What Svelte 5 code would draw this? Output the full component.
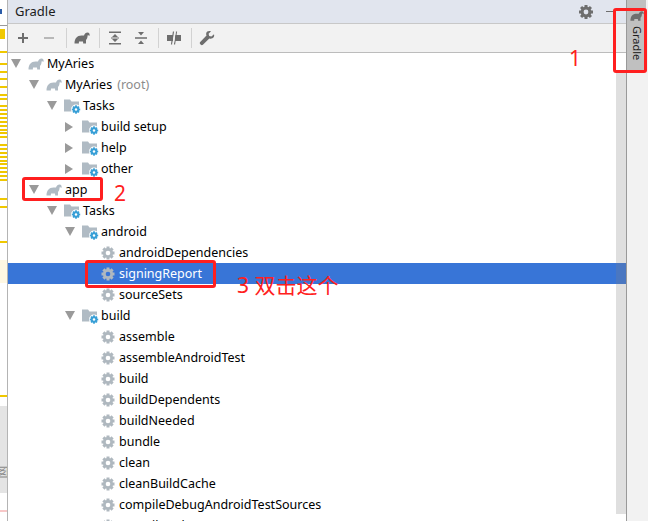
<script>
  const marks = [51, 63, 71, 78, 86, 94, 98, 105, 109, 113, 117, 121, 125, 129, 132, 136, 144, 148, 152, 156, 160, 163, 167, 171, 175, 179, 198, 206, 241, 395];

  const rows = [
    { label: 'MyAries', level: 0, arrow: 'open', icon: 'elephant' },
    { label: 'MyAries', note: '(root)', level: 1, arrow: 'open', icon: 'elephant' },
    { label: 'Tasks', level: 2, arrow: 'open', icon: 'folder' },
    { label: 'build setup', level: 3, arrow: 'closed', icon: 'folder' },
    { label: 'help', level: 3, arrow: 'closed', icon: 'folder' },
    { label: 'other', level: 3, arrow: 'closed', icon: 'folder' },
    { label: 'app', level: 1, arrow: 'open', icon: 'elephant' },
    { label: 'Tasks', level: 2, arrow: 'open', icon: 'folder' },
    { label: 'android', level: 3, arrow: 'open', icon: 'folder' },
    { label: 'androidDependencies', level: 4, icon: 'gear' },
    { label: 'signingReport', level: 4, icon: 'gear', selected: true },
    { label: 'sourceSets', level: 4, icon: 'gear' },
    { label: 'build', level: 3, arrow: 'open', icon: 'folder' },
    { label: 'assemble', level: 4, icon: 'gear' },
    { label: 'assembleAndroidTest', level: 4, icon: 'gear' },
    { label: 'build', level: 4, icon: 'gear' },
    { label: 'buildDependents', level: 4, icon: 'gear' },
    { label: 'buildNeeded', level: 4, icon: 'gear' },
    { label: 'bundle', level: 4, icon: 'gear' },
    { label: 'clean', level: 4, icon: 'gear' },
    { label: 'cleanBuildCache', level: 4, icon: 'gear' },
    { label: 'compileDebugAndroidTestSources', level: 4, icon: 'gear' },
    { label: 'compileDebugSources', level: 4, icon: 'gear' }
  ];

  const teeth = [0, 45, 90, 135];
  const elephantPath = 'M.5 13.500C.5 8.500 3 5.500 7.500 5.500H10C10.500 3.500 12 2.500 13.500 2.500 15.200 2.500 16 4 15.500 6 14.800 5.300 14 5 13.600 5.600 13.500 7.500 13.200 9 12 10V13.500H9.200L9 11.500H5L4.800 13.500z';
</script>

{#snippet elephant(cls)}
  <svg class={cls} width="16" height="16" viewBox="0 0 16 16"><path d={elephantPath} /></svg>
{/snippet}

{#snippet gearShape(cx, cy, r, w)}
  <g transform="translate({cx} {cy})">
    {#each teeth as a}
      <rect x={-w / 2} y={-r} width={w} height={r * 2} transform="rotate({a})" />
    {/each}
    <circle r={r * 0.78} />
  </g>
{/snippet}

<div class="window">
  <aside class="gutter">
    <span class="gutter-blue"></span>
    <span class="gutter-rule"></span>
    <span class="gutter-block"></span>
    {#each marks as y}
      <span class="mark" style="top: {y}px"></span>
    {/each}
    <span class="gutter-cream"></span>
    <span class="gutter-gray"><span class="gutter-glyph">网</span></span>
    <span class="gutter-pink"></span>
  </aside>

  <main class="panel">
    <header class="title-bar">
      <span class="title">Gradle</span>
      <svg class="title-gear" width="16" height="16" viewBox="0 0 16 16">
        <g fill="#6e6e6e">{@render gearShape(8, 8, 7, 3)}</g>
        <circle cx="8" cy="8" r="2.400" fill="#e1e5ee" />
      </svg>
      <span class="minimize"></span>
    </header>

    <div class="toolbar">
      <svg class="tool" viewBox="0 0 16 16"><path d="M7 3h2v4h4v2H9v4H7V9H3V7h4z" fill="#6e6e6e" /></svg>
      <svg class="tool" viewBox="0 0 16 16"><path d="M3 7h10v2H3z" fill="#b8b8b8" /></svg>
      <span class="sep"></span>
      {@render elephant('tool dark')}
      <span class="sep"></span>
      <svg class="tool" viewBox="0 0 16 16" fill="#6e6e6e">
        <path d="M2 1.500h12v1.500H2zM2 13h12v1.500H2zM5 7l3-3 3 3zM5 9l3 3 3-3zM4 7.500h8v1H4z" />
      </svg>
      <svg class="tool" viewBox="0 0 16 16" fill="#6e6e6e">
        <path d="M2 7.300h12v1.400H2zM5 2l3 3.500L11 2zM5 14l3-3.500 3 3.500z" />
      </svg>
      <span class="sep"></span>
      <svg class="tool" viewBox="0 0 16 16">
        <path d="M1 5h6v6H1zM9 5h6v6H9z" fill="#6e6e6e" />
        <path d="M5.500 14.500 7.500 1.500M8.500 14.500l2-13" stroke="#6e6e6e" stroke-width="1.200" fill="none" />
        <path d="M7.200 14.500 9.200 1.500" stroke="#f2f2f2" stroke-width="1.200" fill="none" />
      </svg>
      <span class="sep"></span>
      <svg class="tool" viewBox="0 0 16 16" fill="#6e6e6e">
        <path d="M15 4.200 12.400 6.600 10.200 6l-.6-2.200L12 1.200C9.800.4 7.600 1.200 7.200 3.200c-.2 1 0 1.800.3 2.400L1.200 12c-.6.600-.6 1.500 0 2.100l.6.600c.6.600 1.500.6 2.100 0L10.300 8.400c.7.300 1.500.4 2.400.2 2-.5 3-2.400 2.300-4.400z" />
      </svg>
    </div>

    <div class="tree">
      {#each rows as row}
        <div class="row" class:selected={row.selected} style="padding-left: {row.level * 18 + 3}px">
          <span class="arrow">
            {#if row.arrow === 'open'}
              <svg width="10" height="9" viewBox="0 0 10 9"><path d="M0 0h10L5 9z" /></svg>
            {:else if row.arrow === 'closed'}
              <svg width="8" height="10" viewBox="0 0 8 10"><path d="M0 0l8 5-8 5z" /></svg>
            {/if}
          </span>
          <span class="icon">
            {#if row.icon === 'elephant'}
              {@render elephant('tree-elephant')}
            {:else if row.icon === 'folder'}
              <svg width="17" height="16" viewBox="0 0 17 16">
                <path d="M0 1.500h6l1.500 2H15v10H0z" fill="#b0bbc4" />
                <circle cx="12" cy="11.500" r="5" fill="#fff" />
                <g fill="#389fd6">{@render gearShape(12, 11.500, 4.200, 1.800)}</g>
                <circle cx="12" cy="11.500" r="1.200" fill="#fff" />
              </svg>
            {:else}
              <svg width="16" height="16" viewBox="0 0 16 16">
                <g fill="#afb8bf">{@render gearShape(8, 8, 6.500, 3)}</g>
                <circle cx="8" cy="8" r="2.300" fill={row.selected ? '#3875d7' : '#fff'} />
              </svg>
            {/if}
          </span>
          <span class="label">{row.label}</span>
          {#if row.note}<span class="note">{row.note}</span>{/if}
        </div>
      {/each}
      <span class="scroll-thumb"></span>
    </div>
  </main>

  <aside class="side-strip">
    <div class="side-tab">
      {@render elephant('side-elephant')}
      <span class="side-label">Gradle</span>
    </div>
  </aside>

  <span class="callout box-1"></span>
  <span class="callout box-2"></span>
  <span class="callout box-3"></span>
  <span class="note-red n-1">1</span>
  <span class="note-red n-2">2</span>
  <span class="note-red n-3">3 双击这个</span>
</div>

<style>
  :global(body) {
    background: #fff;
  }

  .window {
    position: relative;
    display: flex;
    width: 648px;
    height: 521px;
    overflow: hidden;
    font-family: "Noto Sans", "Noto Sans CJK SC", sans-serif;
    font-size: 12.5px;
    color: #000;
  }

  .gutter {
    position: relative;
    flex: 0 0 7px;
    border-right: 1px solid #b4b4b4;
    background: #fff;
  }

  .gutter span {
    position: absolute;
    left: 0;
  }

  .gutter-blue {
    top: 9px;
    width: 2px;
    height: 5px;
    background: #2a5ca8;
  }

  .gutter-rule {
    top: 25px;
    width: 7px;
    height: 1px;
    background: #9a9a9a;
  }

  .gutter-block {
    top: 29px;
    width: 5px;
    height: 10px;
    background: #f0c800;
  }

  .mark {
    width: 7px;
    height: 2px;
    background: #f0c800;
  }

  .gutter-cream {
    top: 260px;
    width: 7px;
    height: 23px;
    background: #fff8e3;
  }

  .gutter-gray {
    top: 406px;
    width: 7px;
    height: 87px;
    background: #e4e4e4;
    overflow: hidden;
  }

  .gutter-gray .gutter-glyph {
    top: 59px;
    left: -4px;
    font-size: 13px;
    line-height: 14px;
    color: #8a8a8a;
    transform: rotate(90deg);
  }

  .gutter-pink {
    top: 510px;
    width: 7px;
    height: 2px;
    background: #f8c8c8;
  }

  .panel {
    flex: 1;
    display: flex;
    flex-direction: column;
    min-width: 0;
  }

  .title-bar {
    flex: 0 0 23px;
    display: flex;
    align-items: center;
    padding: 0 13px 0 7px;
    background: #e1e5ee;
    border-bottom: 1px solid #c8c8c8;
  }

  .title {
    flex: 1;
    font-size: 13px;
    padding-bottom: 2px;
    color: #1c1c1c;
  }

  .title-gear {
    margin-right: 12px;
  }

  .minimize {
    width: 7px;
    height: 1px;
    background: #6e6e6e;
  }

  .toolbar {
    flex: 0 0 28px;
    display: flex;
    align-items: center;
    gap: 10px;
    padding-left: 7px;
    background: #f2f2f2;
    border-bottom: 1px solid #bcbcbc;
  }

  .toolbar :global(.tool) {
    width: 16px;
    height: 16px;
  }

  .toolbar :global(.dark) {
    fill: #6e6e6e;
  }

  .sep {
    width: 1px;
    height: 20px;
    margin: 0 -3px 0 -1px;
    background: #d2d2d2;
  }

  .tree {
    position: relative;
    flex: 1;
    min-height: 0;
  }

  .row {
    display: flex;
    align-items: center;
    height: 21px;
    white-space: nowrap;
  }

  .row.selected {
    background: #3875d7;
    color: #fff;
  }

  .arrow {
    flex: 0 0 17px;
    display: flex;
    align-items: center;
    fill: #9a9a9a;
  }

  .icon {
    flex: 0 0 19px;
    display: flex;
    align-items: center;
  }

  .icon :global(.tree-elephant) {
    fill: #b0bbc4;
  }

  .label,
  .note {
    padding-bottom: 1px;
  }

  .note {
    margin-left: 5px;
    color: #8c8c8c;
  }

  .scroll-thumb {
    position: absolute;
    top: 19px;
    right: 0;
    width: 10px;
    height: 442px;
    background: rgba(128, 128, 128, 0.25);
  }

  .side-strip {
    flex: 0 0 21px;
    background: #f2f2f2;
    border-left: 1px solid #999;
  }

  .side-tab {
    display: flex;
    flex-direction: column;
    align-items: center;
    gap: 3px;
    width: 19px;
    height: 70px;
    padding-top: 9px;
    box-sizing: border-box;
    background: #c0c0c0;
  }

  .side-tab :global(.side-elephant) {
    flex: none;
    width: 14px;
    height: 14px;
    fill: #6e6e6e;
  }

  .side-label {
    writing-mode: vertical-rl;
    font-size: 11px;
    line-height: 14px;
    color: #1c1c1c;
  }

  .callout {
    position: absolute;
    box-sizing: border-box;
    border: 3px solid #ff1f1f;
    border-radius: 3px;
  }

  .box-1 {
    left: 613px;
    top: 8px;
    width: 34px;
    height: 65px;
  }

  .box-2 {
    left: 22px;
    top: 177px;
    width: 81px;
    height: 24px;
  }

  .box-3 {
    left: 85px;
    top: 260px;
    width: 131px;
    height: 28px;
  }

  .note-red {
    position: absolute;
    color: #ff2020;
    font-size: 21px;
    line-height: 24px;
  }

  .n-1 {
    left: 569px;
    top: 46px;
  }

  .n-2 {
    left: 114px;
    top: 181px;
  }

  .n-3 {
    left: 237px;
    top: 273px;
  }
</style>
